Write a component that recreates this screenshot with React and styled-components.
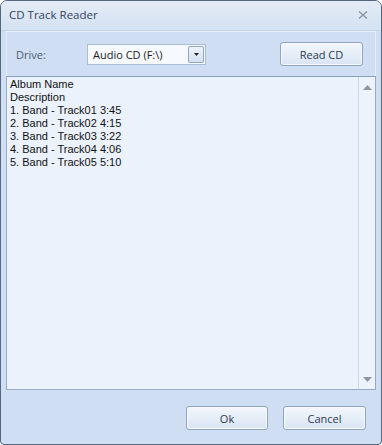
import React from "react";
import styled, { createGlobalStyle } from "styled-components";

const Global = createGlobalStyle`
    html, body {
        margin: 0;
        padding: 0;
        background: #ffffff;
    }
    * {
        box-sizing: border-box;
    }
`;

const Window = styled.div`
    width: 382px;
    height: 445px;
    display: flex;
    flex-direction: column;
    border: 1px solid #56667d;
    border-radius: 7px 7px 4px 4px;
    background: #cfdef3;
    overflow: hidden;
    font-family: "Open Sans", "Liberation Sans", sans-serif;
`;

const TitleBar = styled.div`
    height: 30px;
    flex: none;
    display: flex;
    align-items: center;
    justify-content: space-between;
    padding: 0 8px 2px 8px;
    background: linear-gradient(#e3ebf6, #d5e2f3);
    border-bottom: 1px solid #c3d3ea;
`;

const Title = styled.span`
    font-size: 11.5px;
    color: #34445e;
`;

const CloseBox = styled.div`
    width: 14px;
    height: 14px;
    display: flex;
    align-items: center;
    justify-content: center;
    margin-right: 3px;
`;

const TopPanel = styled.div`
    height: 45px;
    flex: none;
    margin: 0 5px;
    display: flex;
    align-items: center;
    padding: 0 12px 0 9px;
    border: 1px solid #eaf0f9;
    border-bottom: none;
`;

const Label = styled.span`
    width: 71px;
    font-size: 11px;
    color: #4d5d76;
    margin-top: 1px;
`;

const Combo = styled.div`
    width: 119px;
    height: 21px;
    display: flex;
    align-items: center;
    justify-content: space-between;
    padding: 0 1px 0 5px;
    background: #f6f9fd;
    border: 1px solid #a9bcd6;
`;

const ComboText = styled.span`
    font-size: 11px;
    color: #1b1b1b;
`;

const DropButton = styled.div`
    width: 16px;
    height: 17px;
    display: flex;
    align-items: center;
    justify-content: center;
    border: 1px solid #8ea5c4;
    border-radius: 2px;
    background: linear-gradient(#eef3fa, #d5e1f1);
`;

const Button = styled.button`
    width: ${(props) => props.w}px;
    height: 24px;
    margin-left: ${(props) => (props.push ? "auto" : "0")};
    border: 1px solid #8ea4c2;
    border-radius: 3px;
    background: linear-gradient(#f4f7fc 0%, #e6eef8 50%, #d9e4f3 100%);
    box-shadow: inset 0 0 0 1px #f7fafe;
    font-family: "Open Sans", "Liberation Sans", sans-serif;
    font-size: 11px;
    color: #2b3a52;
    padding: 0;
`;

const TextBox = styled.div`
    flex: 1;
    margin: 0 5px;
    display: flex;
    background: #ebf2fb;
    border: 1px solid #96abc8;
    border-top-color: #8aa0be;
`;

const Lines = styled.div`
    flex: 1;
    padding: 1px 3px;
    font-family: "Liberation Sans", "DejaVu Sans", sans-serif;
    font-size: 11px;
    line-height: 13px;
    color: #111;
`;

const Line = styled.div`
    white-space: pre;
`;

const ScrollBar = styled.div`
    width: 17px;
    display: flex;
    flex-direction: column;
    justify-content: space-between;
    align-items: center;
    padding: 8px 0 7px 0;
    border-left: 1px solid #c9d6e8;
    background: #edf3fb;
`;

const Footer = styled.div`
    height: 54px;
    flex: none;
    display: flex;
    align-items: center;
    justify-content: flex-end;
    gap: 15px;
    padding: 2px 15px 0 0;
`;

function Arrow({ up, color = "#8c96a4", w = 9, h = 5 }) {
    return (
        <svg width={w} height={h} viewBox="0 0 9 5">
            {up ? (
                <polygon points="0,5 4.5,0 9,5" fill={color} />
            ) : (
                <polygon points="0,0 4.5,5 9,0" fill={color} />
            )}
        </svg>
    );
}

const tracks = [
    "Album Name",
    "Description",
    "1. Band - Track01 3:45",
    "2. Band - Track02 4:15",
    "3. Band - Track03 3:22",
    "4. Band - Track04 4:06",
    "5. Band - Track05 5:10",
];

export default function App() {
    return (
        <>
            <Global />
            <Window>
                <TitleBar>
                    <Title>CD Track Reader</Title>
                    <CloseBox>
                        <svg width="10" height="8" viewBox="0 0 10 8">
                            <path d="M1 0.5 L9 7.5 M9 0.5 L1 7.5" stroke="#8a95a6" strokeWidth="1.4" />
                        </svg>
                    </CloseBox>
                </TitleBar>
                <TopPanel>
                    <Label>Drive:</Label>
                    <Combo>
                        <ComboText>Audio CD (F:\)</ComboText>
                        <DropButton>
                            <Arrow color="#222" w={5} h={3} />
                        </DropButton>
                    </Combo>
                    <Button w={83} push>Read CD</Button>
                </TopPanel>
                <TextBox>
                    <Lines>
                        {tracks.map((t) => (
                            <Line key={t}>{t}</Line>
                        ))}
                    </Lines>
                    <ScrollBar>
                        <Arrow up />
                        <Arrow />
                    </ScrollBar>
                </TextBox>
                <Footer>
                    <Button w={82}>Ok</Button>
                    <Button w={83}>Cancel</Button>
                </Footer>
            </Window>
        </>
    );
}
